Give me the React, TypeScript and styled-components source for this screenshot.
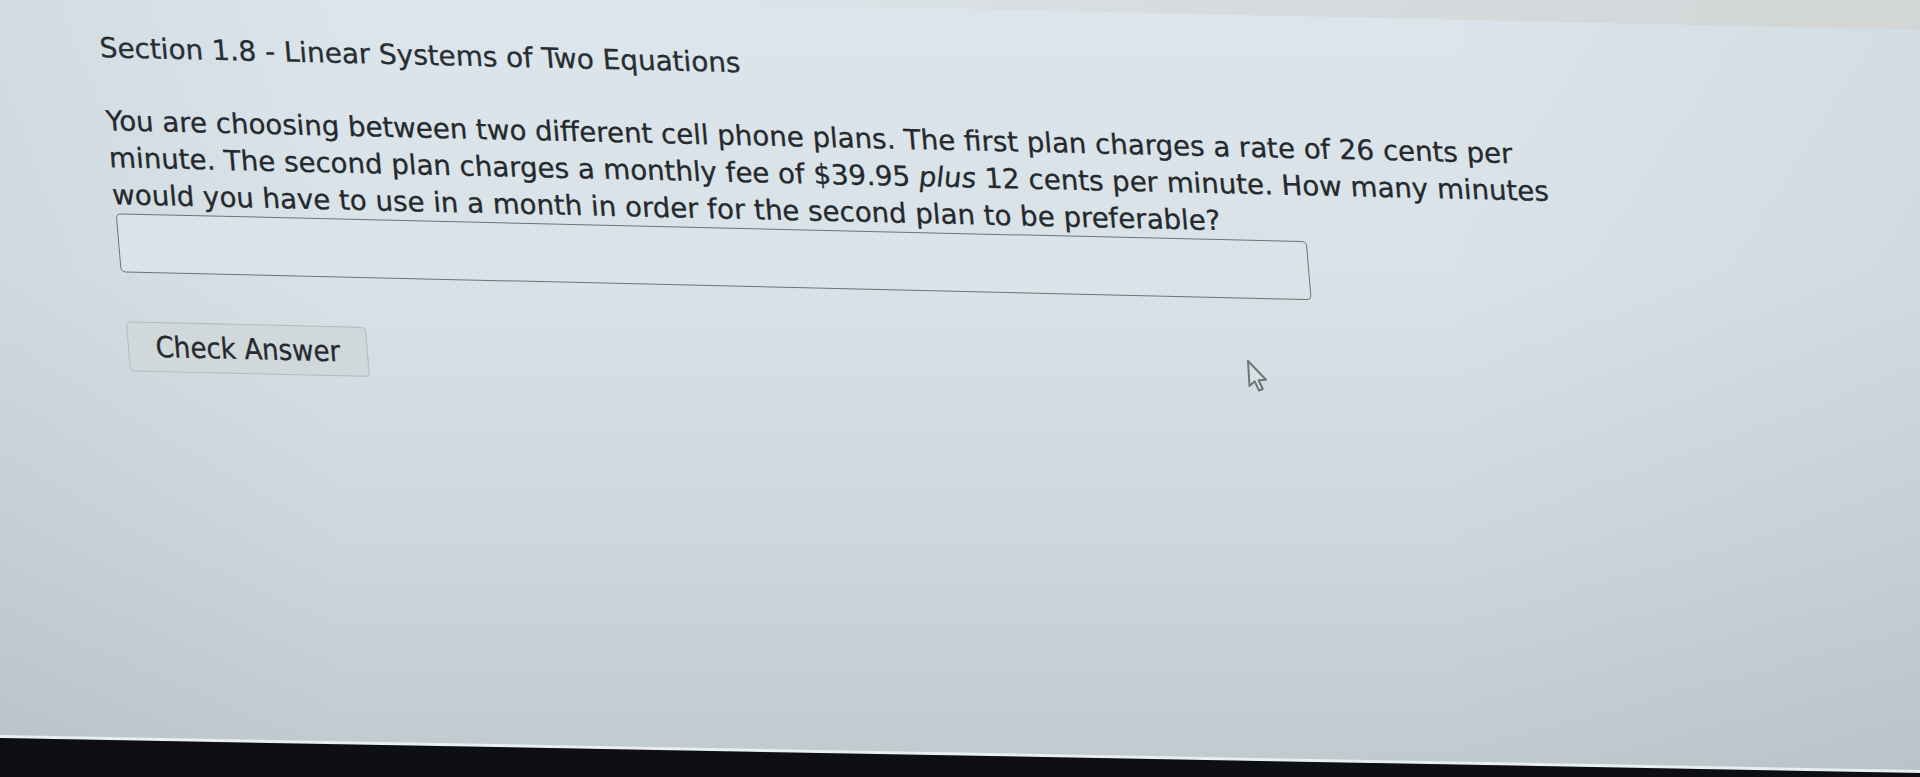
import React from "react";
import styled, { createGlobalStyle } from "styled-components";

const Global = createGlobalStyle`
  html, body { margin: 0; padding: 0; }
  body {
    background: #0d0f15;
    font-family: "DejaVu Sans", sans-serif;
  }
`;

const Screen = styled.div`
  position: relative;
  width: 1920px;
  height: 777px;
  overflow: hidden;
  background:
    linear-gradient(to right, rgba(60, 80, 90, 0.06) 0%, rgba(60, 80, 90, 0) 18%, rgba(60, 80, 90, 0) 75%, rgba(60, 80, 90, 0.05) 100%),
    linear-gradient(to bottom, #dbe5eb 0%, #d8e2e7 35%, #ccd6db 70%, #bfc9ce 100%);
`;

const Page = styled.main`
  display: flex;
  flex-direction: column;
  align-items: flex-start;
  padding: 27px 0 0 96px;
  transform-origin: 0 0;
  transform: skew(4.8deg, 1.34deg);
  color: #25292d;
  -webkit-text-stroke: 0.3px currentColor;
`;

const Title = styled.h1`
  margin: 0 0 36px 0;
  font-family: "DejaVu Sans", sans-serif;
  font-size: 27.8px;
  line-height: 37px;
  font-weight: normal;
  white-space: nowrap;
  color: #282d31;
`;

const Question = styled.p`
  margin: 0;
  font-family: "DejaVu Sans", sans-serif;
  font-size: 27.6px;
  line-height: 37px;
  white-space: nowrap;
`;

const AnswerBox = styled.div`
  box-sizing: border-box;
  width: 1191px;
  height: 59px;
  margin-left: 2px;
  border: 1.5px solid #6c7478;
  border-radius: 5px;
  background: #dae3e8;
`;

const CheckButton = styled.button`
  box-sizing: border-box;
  margin: 49px 0 0 3px;
  width: 240px;
  height: 50px;
  padding: 0;
  border: 1.5px solid #b0babf;
  border-radius: 5px;
  background: #d0d8dc;
  color: #25292d;
  font-family: "DejaVu Sans Condensed", "DejaVu Sans", sans-serif;
  font-size: 29px;
  line-height: 1;
  -webkit-text-stroke: 0.3px currentColor;
`;

const Overlay = styled.svg<{ $top: number }>`
  position: absolute;
  left: 0;
  top: ${(p) => p.$top}px;
  pointer-events: none;
`;

const Cursor = styled.svg`
  position: absolute;
  left: 1246px;
  top: 359px;
`;

export default function App() {
  return (
    <>
      <Global />
      <Screen>
        <Overlay $top={0} width={1920} height={40} viewBox="0 0 1920 40">
          <defs>
            <linearGradient id="topband" x1="0" x2="1" y1="0" y2="0">
              <stop offset="0" stopColor="#d6d9da" stopOpacity="0" />
              <stop offset="0.4" stopColor="#d6d9da" stopOpacity="0.8" />
              <stop offset="1" stopColor="#d2d6d7" stopOpacity="1" />
            </linearGradient>
          </defs>
          <polygon points="700,0 1920,0 1920,30 700,3" fill="url(#topband)" />
        </Overlay>
        <Page>
          <Title>Section 1.8 - Linear Systems of Two Equations</Title>
          <Question>
            You are choosing between two different cell phone plans. The first plan charges a rate of 26 cents per
            <br />
            minute. The second plan charges a monthly fee of $39.95 <i>plus</i> 12 cents per minute. How many minutes
            <br />
            would you have to use in a month in order for the second plan to be preferable?
          </Question>
          <AnswerBox />
          <CheckButton type="button">Check Answer</CheckButton>
        </Page>
        <Cursor width={24} height={36} viewBox="0 0 24 36">
          <path
            d="M2 2 L3.5 27 L8.7 22.3 L13 31.5 L16.8 30 L12.6 21.2 L20 20.7 Z"
            fill="#d9e2e7"
            stroke="#6e7579"
            strokeWidth={2}
            strokeLinejoin="round"
          />
        </Cursor>
        <Overlay $top={700} width={1920} height={77} viewBox="0 0 1920 77">
          <polygon points="0,35 1920,70 1920,73 0,38" fill="#e8eff2" />
          <polygon points="0,38 1920,73 1920,77 0,77" fill="#0d0f15" />
        </Overlay>
      </Screen>
    </>
  );
}
